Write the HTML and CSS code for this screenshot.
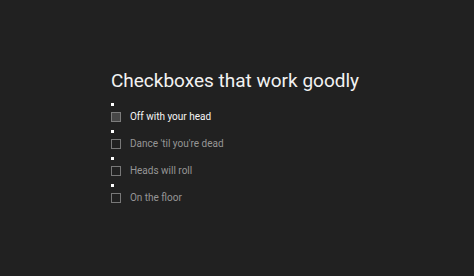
FILE: index.html
```html
<!DOCTYPE html>
<html lang="en">
<head>
<meta charset="utf-8">
<title>Checkboxes</title>
<link rel="stylesheet" href="styles.css">
</head>
<body>
<main class="page">
  <section class="panel">
    <h1 class="title">Checkboxes that work goodly</h1>
    <ul class="list">
      <li class="item"><label class="row row-active"><span class="box"></span><span class="text">Off with your head</span></label></li>
      <li class="item"><label class="row"><span class="box"></span><span class="text">Dance 'til you're dead</span></label></li>
      <li class="item"><label class="row"><span class="box"></span><span class="text">Heads will roll</span></label></li>
      <li class="item"><label class="row"><span class="box"></span><span class="text">On the floor</span></label></li>
    </ul>
  </section>
</main>
</body>
</html>
```
FILE: styles.css
```css
html, body {
  margin: 0;
  padding: 0;
  background: #212121;
}
body {
  font-family: Roboto, "Noto Sans", sans-serif;
  color: #fff;
}
.page {
  min-height: 100vh;
  display: flex;
  align-items: center;
  justify-content: center;
}
.panel {
  padding: 0 4px 2px 0;
}
.title {
  margin: 0 0 5px;
  font-size: 19px;
  font-weight: 400;
  line-height: 22px;
  color: #f2f2f2;
}
.list {
  margin: 0;
  padding: 0;
  list-style: square inside;
  color: #fff;
  font-size: 11px;
}
.item {
  line-height: 13.5px;
}
.row {
  display: flex;
  align-items: center;
  gap: 9px;
  color: #969696;
  font-size: 10px;
}
.row-active {
  color: #f6f6f6;
}
.box {
  width: 8px;
  height: 8px;
  border: 1px solid #787878;
  background: #212121;
}
.row-active .box {
  background: #474747;
  border-color: #7c7c7c;
}
```
